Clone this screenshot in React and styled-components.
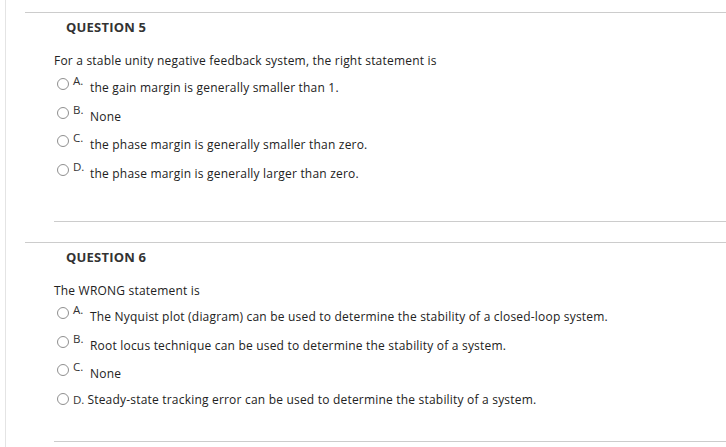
import React from "react";
import styled, { createGlobalStyle } from "styled-components";

const Global = createGlobalStyle`
  html, body { margin: 0; padding: 0; background: #fff; }
  body { font-family: "Open Sans", "Liberation Sans", sans-serif; color: #222; }
`;

const Page = styled.div`
  margin-left: 5px;
  border-left: 1px solid #e4e4e4;
  min-height: 447px;
  padding-top: 12px;
  box-sizing: border-box;
  overflow: hidden;
`;

const Question = styled.section`
  margin-left: 19px;
  border-top: 1px solid #cccccc;
  margin-bottom: ${(p) => p.$gap || 0}px;
`;

const Title = styled.h3`
  margin: 0;
  padding: 5px 0 0 41px;
  font-size: 13px;
  line-height: 18px;
  font-weight: 700;
  color: #333;
  letter-spacing: 0.2px;
`;

const Body = styled.div`
  margin-left: 29px;
  padding-top: ${(p) => p.$top}px;
  border-bottom: 1px solid #cccccc;
  padding-bottom: ${(p) => p.$bottom}px;
`;

const Prompt = styled.p`
  margin: 0 0 ${(p) => p.$after}px 0;
  font-size: 12px;
  letter-spacing: 0.2px;
  line-height: 16px;
  color: #222;
`;

const Options = styled.div`
  display: flex;
  flex-direction: column;
`;

const Option = styled.label`
  display: flex;
  align-items: flex-start;
  height: 28.5px;
  padding-left: 3px;
`;

const Radio = styled.span`
  flex: none;
  width: 12px;
  height: 12px;
  border: 1px solid #8f8f8f;
  border-radius: 50%;
  box-sizing: border-box;
  margin-top: 4px;
  background: #fff;
`;

const Letter = styled.span`
  flex: none;
  font-size: 11.5px;
  line-height: 14px;
  color: #333;
  margin-left: 4px;
  width: ${(p) => (p.$flat ? "auto" : "17px")};
  margin-right: ${(p) => (p.$flat ? "3px" : "0")};
  padding-top: ${(p) => (p.$flat ? 4 : 0)}px;
`;

const Answer = styled.span`
  font-size: 12px;
  letter-spacing: 0.2px;
  line-height: 14px;
  color: #222;
  padding-top: ${(p) => (p.$flat ? 4 : 7)}px;
  white-space: nowrap;
`;

const q5 = [
  ["A.", "the gain margin is generally smaller than 1."],
  ["B.", "None"],
  ["C.", "the phase margin is generally smaller than zero."],
  ["D.", "the phase margin is generally larger than zero."],
];

const q6 = [
  ["A.", "The Nyquist plot (diagram) can be used to determine the stability of a closed-loop system."],
  ["B.", "Root locus technique can be used to determine the stability of a system."],
  ["C.", "None"],
  ["D.", "Steady-state tracking error can be used to determine the stability of a system.", true],
];

function QuestionBlock({ number, prompt, options, gap, top, after, bottom }) {
  return (
    <Question $gap={gap}>
      <Title>QUESTION {number}</Title>
      <Body $top={top} $bottom={bottom}>
        <Prompt $after={after}>{prompt}</Prompt>
        <Options>
          {options.map(([l, t, flat]) => (
            <Option key={l}>
              <Radio />
              <Letter $flat={flat}>{l}</Letter>
              <Answer $flat={flat}>{t}</Answer>
            </Option>
          ))}
        </Options>
      </Body>
    </Question>
  );
}

export default function App() {
  return (
    <>
      <Global />
      <Page>
        <QuestionBlock
          number={5}
          prompt="For a stable unity negative feedback system, the right statement is"
          options={q5}
          gap={20}
          top={17}
          after={5}
          bottom={33}
        />
        <QuestionBlock
          number={6}
          prompt="The WRONG statement is"
          options={q6}
          gap={0}
          top={17}
          after={4}
          bottom={24}
        />
      </Page>
    </>
  );
}
